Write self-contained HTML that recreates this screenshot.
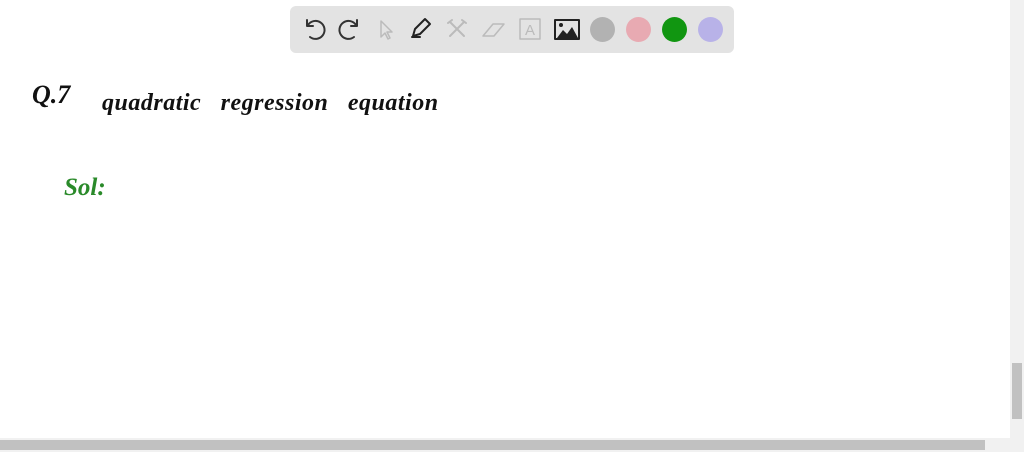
<!DOCTYPE html>
<html><head><style>
html,body{margin:0;padding:0;width:1024px;height:452px;overflow:hidden;background:#fff;position:relative;font-family:"Liberation Sans",sans-serif}
.tb{position:absolute;left:290px;top:6px;width:444px;height:47px;background:#e3e3e3;border-radius:6px}
.c{position:absolute;top:17px;width:25px;height:25px;border-radius:50%}
.hw{position:absolute;font-family:"Liberation Serif",serif;font-style:italic;white-space:nowrap;font-weight:bold}
</style></head><body>
<div class="tb"></div>
<svg style="position:absolute;left:290px;top:6px" width="444" height="47" fill="none" stroke-linecap="round" stroke-linejoin="round">
 <g stroke="#333" stroke-width="2">
  <path d="M17 14 v6 h6"/><path d="M18 19 A9 9 0 1 1 20 31"/>
  <path d="M67 14 v6 h-6"/><path d="M66 19 A9 9 0 1 0 64 31"/>
 </g>
 <path d="M91 15 l0 16 l4 -4 l3 6 l2 -1 l-3 -6 l5 0 z" stroke="#bbb" stroke-width="1.5"/>
 <path d="M123 30 l2 -7 l10 -10 l5 5 l-10 10 z M122 31 h8" stroke="#222" stroke-width="2"/>
 <g stroke="#bbb" stroke-width="2"><path d="M160 16 l14 14 M174 16 l-14 14 M158 17 l4 -3 M176 17 l-4 -3"/></g>
 <path d="M193 30 l10 -12 h11 l-10 12 z" stroke="#bbb" stroke-width="1.5"/>
 <rect x="230" y="13" width="20" height="20" stroke="#bbb" stroke-width="1.5"/>
 <text x="240" y="29" font-size="15" fill="#bbb" text-anchor="middle" font-family="Liberation Sans">A</text>
 <rect x="265" y="14" width="24" height="19" stroke="#222" stroke-width="2"/>
 <path d="M267 32 l6 -8 l4 4 l5 -7 l6 11 z" fill="#222"/><circle cx="271" cy="19" r="2" fill="#222"/>
</svg>
<div class="c" style="left:590px;background:#b2b2b2"></div>
<div class="c" style="left:626px;background:#e8aab2"></div>
<div class="c" style="left:662px;background:#119611"></div>
<div class="c" style="left:698px;background:#b8b2e8"></div>
<div class="hw" style="left:32px;top:80px;font-size:26px;color:#111">Q.7</div>
<div class="hw" style="left:102px;top:90px;font-size:24px;color:#111;letter-spacing:0.5px">quadratic&nbsp;&nbsp; regression&nbsp;&nbsp; equation</div>
<div class="hw" style="left:64px;top:174px;font-size:25px;color:#2a8a2a">Sol:</div>
<div style="position:absolute;left:1010px;top:0;width:14px;height:438px;background:#f1f1f1"></div>
<div style="position:absolute;left:1012px;top:363px;width:10px;height:56px;background:#c1c1c1"></div>
<div style="position:absolute;left:0;top:438px;width:1024px;height:14px;background:#f1f1f1"></div>
<div style="position:absolute;left:0;top:440px;width:985px;height:10px;background:#c1c1c1"></div>
</body></html>
